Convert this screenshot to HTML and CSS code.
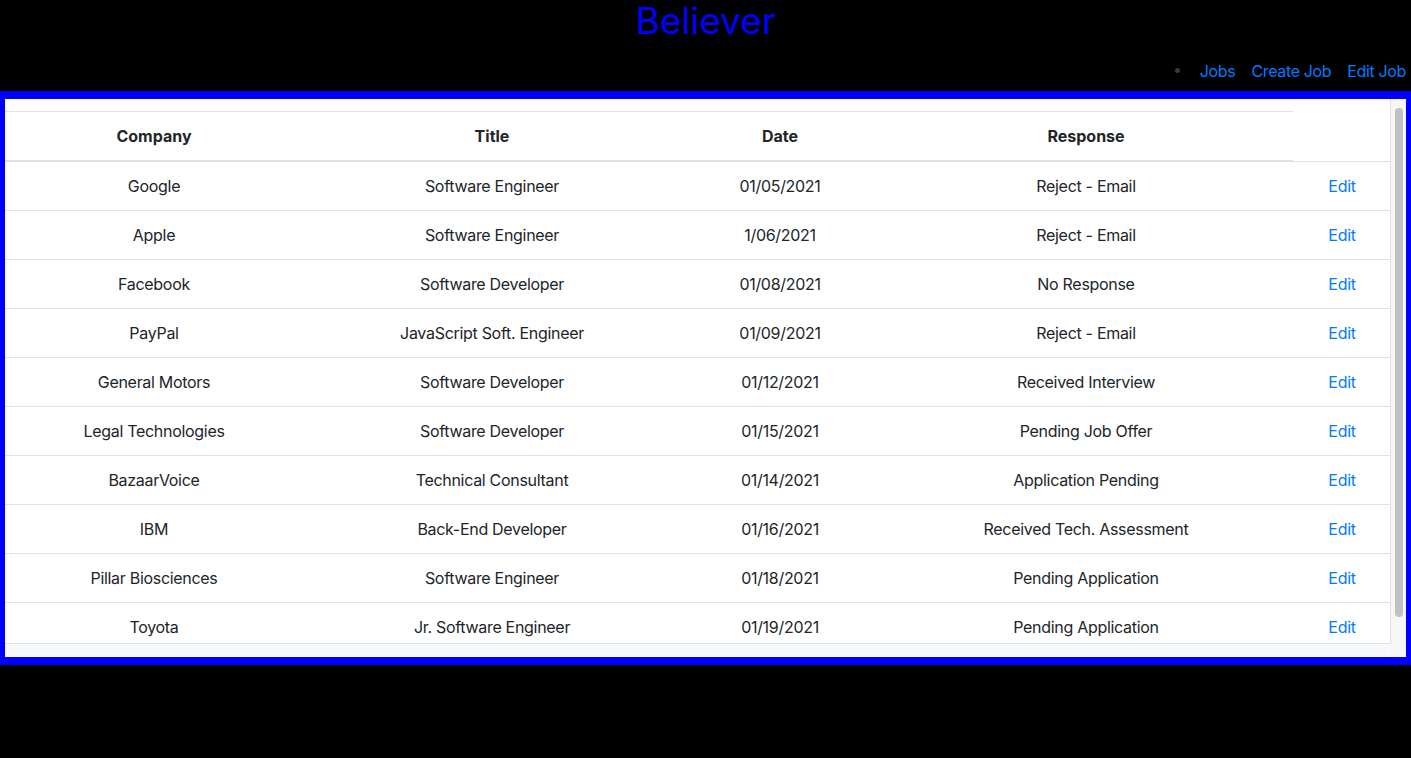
FILE: index.html
```html
<!DOCTYPE html>
<html lang="en">
<head>
<meta charset="utf-8">
<title>Believer</title>
<link rel="stylesheet" href="styles.css">
</head>
<body>
<header class="header">
  <h1 class="brand">Believer</h1>
  <nav class="nav">
    <span class="nav-dot"></span>
    <a class="nav-link" href="#">Jobs</a>
    <a class="nav-link" href="#">Create Job</a>
    <a class="nav-link" href="#">Edit Job</a>
  </nav>
</header>
<main class="frame">
  <div class="scroller">
    <div class="table-box">
      <table class="jobs">
        <colgroup>
          <col class="c1"><col class="c2"><col class="c3"><col class="c4"><col class="c5">
        </colgroup>
        <thead>
          <tr><th>Company</th><th>Title</th><th>Date</th><th>Response</th></tr>
        </thead>
        <tbody>
          <tr><td>Google</td><td>Software Engineer</td><td>01/05/2021</td><td>Reject - Email</td><td><a href="#">Edit</a></td></tr>
          <tr><td>Apple</td><td>Software Engineer</td><td>1/06/2021</td><td>Reject - Email</td><td><a href="#">Edit</a></td></tr>
          <tr><td>Facebook</td><td>Software Developer</td><td>01/08/2021</td><td>No Response</td><td><a href="#">Edit</a></td></tr>
          <tr><td>PayPal</td><td>JavaScript Soft. Engineer</td><td>01/09/2021</td><td>Reject - Email</td><td><a href="#">Edit</a></td></tr>
          <tr><td>General Motors</td><td>Software Developer</td><td>01/12/2021</td><td>Received Interview</td><td><a href="#">Edit</a></td></tr>
          <tr><td>Legal Technologies</td><td>Software Developer</td><td>01/15/2021</td><td>Pending Job Offer</td><td><a href="#">Edit</a></td></tr>
          <tr><td>BazaarVoice</td><td>Technical Consultant</td><td>01/14/2021</td><td>Application Pending</td><td><a href="#">Edit</a></td></tr>
          <tr><td>IBM</td><td>Back-End Developer</td><td>01/16/2021</td><td>Received Tech. Assessment</td><td><a href="#">Edit</a></td></tr>
          <tr><td>Pillar Biosciences</td><td>Software Engineer</td><td>01/18/2021</td><td>Pending Application</td><td><a href="#">Edit</a></td></tr>
          <tr><td>Toyota</td><td>Jr. Software Engineer</td><td>01/19/2021</td><td>Pending Application</td><td><a href="#">Edit</a></td></tr>
        </tbody>
      </table>
    </div>
  </div>
  <div class="scrollbar"><div class="thumb"></div></div>
</main>
</body>
</html>
```
FILE: styles.css
```css
html, body {
  margin: 0;
  padding: 0;
  background: #000;
  font-family: Inter, "Liberation Sans", Arial, sans-serif;
  font-size: 16px;
  color: #212529;
}

.header {
  display: flex;
  flex-direction: column;
}

.brand {
  margin: 0;
  height: 42px;
  line-height: 42px;
  text-align: center;
  color: #0000ff;
  font-size: 37px;
  font-weight: 400;
}

.nav {
  height: 49px;
  box-sizing: border-box;
  display: flex;
  justify-content: flex-end;
  align-items: flex-end;
  gap: 16px;
  padding: 0 5px 8px 0;
}

.nav-link {
  color: #007bff;
  text-decoration: none;
  line-height: 24px;
  letter-spacing: -0.35px;
}

.nav-dot {
  width: 5px;
  height: 5px;
  border-radius: 50%;
  background: #3a3a3a;
  margin: 0 4px 10px 0;
}

.frame {
  display: flex;
  height: 558px;
  border-style: solid;
  border-color: #0000ff;
  border-width: 8px 5px;
  background: #f8f9fa;
}

.scroller {
  flex: 1;
  overflow: hidden;
}

.scrollbar {
  width: 15px;
  flex: none;
  box-sizing: border-box;
  padding: 9px 3px 0 4px;
  background: #f6f6f6;
}

.thumb {
  height: 509px;
  border-radius: 4px;
  background: #c1c1c1;
}

.table-box {
  height: 545px;
  box-sizing: border-box;
  background: #fff;
  border-right: 1px solid #dee2e6;
  border-bottom: 1px solid #dee2e6;
  overflow: hidden;
  padding-top: 12px;
}

.jobs {
  width: 100%;
  border-collapse: collapse;
  table-layout: fixed;
}

.c1 { width: 298px; }
.c2 { width: 378px; }
.c3 { width: 198px; }
.c4 { width: 414px; }
.c5 { width: 98px; }

.jobs th,
.jobs td {
  padding: 12px;
  line-height: 24px;
  text-align: center;
  font-weight: 400;
  border-top: 1px solid #dee2e6;
  letter-spacing: -0.3px;
}

.jobs th {
  font-weight: 700;
  letter-spacing: 0;
  border-bottom: 2px solid #dee2e6;
}

.jobs td a {
  color: #007bff;
  text-decoration: none;
}
```
